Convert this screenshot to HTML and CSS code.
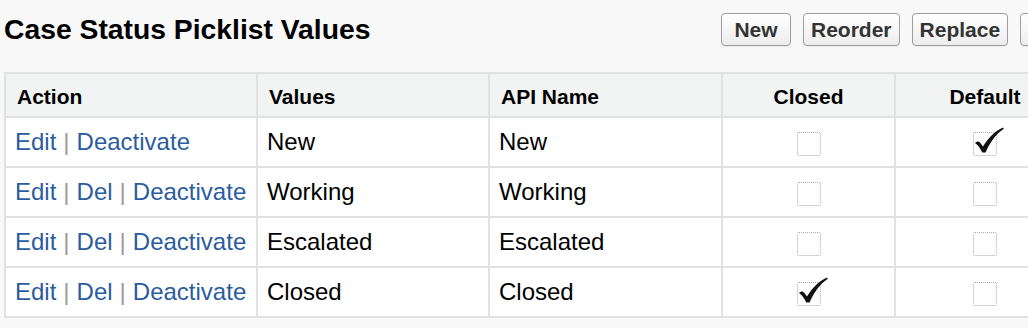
FILE: index.html
```html
<!DOCTYPE html>
<html>
<head>
<meta charset="utf-8">
<link rel="stylesheet" href="styles.css">
</head>
<body>
<div class="page">
  <div class="topbar">
    <h1 class="title">Case Status Picklist Values</h1>
    <div class="buttons">
      <button class="btn">New</button>
      <button class="btn">Reorder</button>
      <button class="btn">Replace</button>
      <button class="btn btn-more" aria-label="More"></button>
    </div>
  </div>
  <table class="grid">
    <colgroup>
      <col class="c-action"><col class="c-values"><col class="c-api"><col class="c-closed"><col class="c-default">
    </colgroup>
    <thead>
      <tr>
        <th>Action</th>
        <th>Values</th>
        <th>API Name</th>
        <th class="center">Closed</th>
        <th class="center">Default</th>
      </tr>
    </thead>
    <tbody>
      <tr>
        <td><a class="lnk">Edit</a><span class="sep">|</span><a class="lnk">Deactivate</a></td>
        <td>New</td>
        <td>New</td>
        <td class="chk"><span class="cb"></span></td>
        <td class="chk"><span class="cb"><svg class="tick" viewBox="-2 -6 36 30"><path d="M2,11 C4,9.5 5.5,9 7,10.5 L10,14.5 C15,6 22,-1 30,-4.5 L30.8,-3.3 C23,2 16.5,11 12.6,20.6 L9.3,20.6 C7.5,16.5 5,13 2,11 Z"/></svg></span></td>
      </tr>
      <tr>
        <td><a class="lnk">Edit</a><span class="sep">|</span><a class="lnk">Del</a><span class="sep">|</span><a class="lnk">Deactivate</a></td>
        <td>Working</td>
        <td>Working</td>
        <td class="chk"><span class="cb"></span></td>
        <td class="chk"><span class="cb"></span></td>
      </tr>
      <tr>
        <td><a class="lnk">Edit</a><span class="sep">|</span><a class="lnk">Del</a><span class="sep">|</span><a class="lnk">Deactivate</a></td>
        <td>Escalated</td>
        <td>Escalated</td>
        <td class="chk"><span class="cb"></span></td>
        <td class="chk"><span class="cb"></span></td>
      </tr>
      <tr>
        <td><a class="lnk">Edit</a><span class="sep">|</span><a class="lnk">Del</a><span class="sep">|</span><a class="lnk">Deactivate</a></td>
        <td>Closed</td>
        <td>Closed</td>
        <td class="chk"><span class="cb"><svg class="tick" viewBox="-2 -6 36 30"><path d="M2,11 C4,9.5 5.5,9 7,10.5 L10,14.5 C15,6 22,-1 30,-4.5 L30.8,-3.3 C23,2 16.5,11 12.6,20.6 L9.3,20.6 C7.5,16.5 5,13 2,11 Z"/></svg></span></td>
        <td class="chk"><span class="cb"></span></td>
      </tr>
    </tbody>
  </table>
</div>
</body>
</html>
```
FILE: styles.css
```css
html, body {
  margin: 0;
  padding: 0;
  overflow: hidden;
  background: #f8f8f8;
}
body {
  font-family: "Liberation Sans", Arial, Helvetica, sans-serif;
  color: #000;
}
.page {
  padding: 13px 0 0 4px;
  width: 1200px;
}
.topbar {
  display: flex;
  align-items: center;
  height: 33px;
}
.title {
  flex: none;
  width: 717px;
  margin: 0;
  font-size: 28.3px;
  font-weight: bold;
  line-height: 33px;
  color: #000;
}
.buttons {
  display: flex;
  gap: 12px;
  flex: none;
}
.btn {
  box-sizing: border-box;
  height: 33px;
  min-width: 70px;
  padding: 0 7px;
  border: 1px solid #9d9d9d;
  border-radius: 4px;
  background: linear-gradient(#ffffff, #ededed);
  box-shadow: 0 1px 0 rgba(0,0,0,0.06);
  font-family: "Liberation Sans", Arial, Helvetica, sans-serif;
  font-size: 21px;
  font-weight: bold;
  color: #333;
  white-space: nowrap;
}
.btn-more {
  width: 120px;
}
.grid {
  margin-top: 26px;
  border-collapse: separate;
  border-spacing: 0;
  border-left: 2px solid #e1e1e1;
  border-top: 2px solid #e1e1e1;
  background: #fff;
  table-layout: fixed;
  width: 1070px;
}
.c-action { width: 252px; }
.c-values { width: 232px; }
.c-api { width: 233px; }
.c-closed { width: 173px; }
.c-default { width: 180px; }
.grid th, .grid td {
  border-right: 2px solid #e1e1e1;
  border-bottom: 2px solid #e1e1e1;
  vertical-align: middle;
  text-align: left;
  white-space: nowrap;
}
.grid th {
  background: #f2f3f3;
  height: 44px;
  padding: 3px 10px 0 11px;
  font-size: 21px;
  font-weight: bold;
  box-sizing: border-box;
}
.grid td {
  height: 48px;
  padding: 0 8px 0 9px;
  font-size: 24px;
}
.grid th.center { text-align: center; padding: 3px 0 0; }
.grid td.chk { padding: 0; }
.lnk {
  color: #2b5ca0;
  text-decoration: none;
}
.sep {
  color: #9a9a9a;
  margin: 0 7px;
}
.cb {
  position: relative;
  display: block;
  box-sizing: border-box;
  width: 24px;
  height: 24px;
  margin: 4px auto 0;
  border: 1px dotted #aaaaaa;
  border-radius: 2px;
}
.tick {
  position: absolute;
  left: -3px;
  top: -7px;
  width: 36px;
  height: 30px;
  overflow: visible;
}
.tick path { fill: #111; }
```
